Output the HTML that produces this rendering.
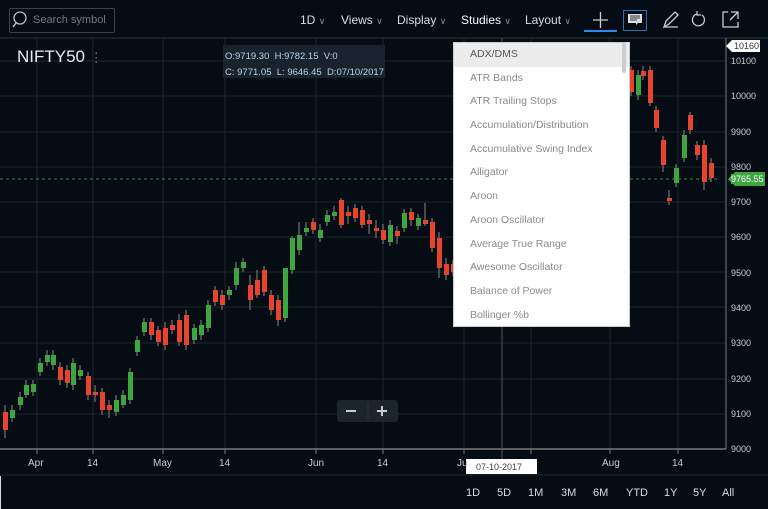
<!DOCTYPE html>
<html><head><meta charset="utf-8"><style>
body{margin:0;width:768px;height:509px;background:#060c13;overflow:hidden;font-family:"Liberation Sans",sans-serif;position:relative}
.a{position:absolute}
.tb{color:#d6dde4;font-size:12px;top:13px}
.dd{left:453px;top:42px;width:175px;height:283px;background:#fff;border:1px solid #ccc}
.dd div{height:23.7px;line-height:23.7px;padding-left:16px;font-size:10.5px;color:#8a8a8a}
.ax{font-size:9px;color:#c8cdd2}
.bt{font-size:11px;color:#d6dde4;top:487px}
</style></head><body>
<svg class="a" style="left:0;top:0" width="768" height="509">
<g stroke="#1a232c" stroke-width="1">
<line x1="37" y1="38" x2="37" y2="449"/><line x1="93" y1="38" x2="93" y2="449"/><line x1="163" y1="38" x2="163" y2="449"/><line x1="225" y1="38" x2="225" y2="449"/><line x1="316" y1="38" x2="316" y2="449"/><line x1="383" y1="38" x2="383" y2="449"/><line x1="464" y1="38" x2="464" y2="449"/><line x1="531" y1="38" x2="531" y2="449"/><line x1="610" y1="38" x2="610" y2="449"/><line x1="678" y1="38" x2="678" y2="449"/>
<line x1="0" y1="61" x2="726" y2="61"/><line x1="0" y1="96" x2="726" y2="96"/><line x1="0" y1="132" x2="726" y2="132"/><line x1="0" y1="167" x2="726" y2="167"/><line x1="0" y1="202" x2="726" y2="202"/><line x1="0" y1="237" x2="726" y2="237"/><line x1="0" y1="272" x2="726" y2="272"/><line x1="0" y1="307" x2="726" y2="307"/><line x1="0" y1="343" x2="726" y2="343"/><line x1="0" y1="379" x2="726" y2="379"/><line x1="0" y1="414" x2="726" y2="414"/>
</g>
<line x1="0" y1="38" x2="768" y2="38" stroke="#2a323a"/>
<line x1="0" y1="449" x2="726" y2="449" stroke="#777" stroke-width="1.5"/>
<line x1="726" y1="38" x2="726" y2="449" stroke="#777"/>
<g stroke="#777"><line x1="37" y1="449" x2="37" y2="454"/><line x1="93" y1="449" x2="93" y2="454"/><line x1="163" y1="449" x2="163" y2="454"/><line x1="225" y1="449" x2="225" y2="454"/><line x1="316" y1="449" x2="316" y2="454"/><line x1="383" y1="449" x2="383" y2="454"/><line x1="464" y1="449" x2="464" y2="454"/><line x1="531" y1="449" x2="531" y2="454"/><line x1="610" y1="449" x2="610" y2="454"/><line x1="678" y1="449" x2="678" y2="454"/></g>
<line x1="0" y1="475" x2="768" y2="475" stroke="#1e262e"/>
<line x1="502" y1="38" x2="502" y2="460" stroke="#555"/>
<line x1="0" y1="179" x2="720" y2="179" stroke="#3a8a3e" stroke-dasharray="3,3"/>
<g stroke="#888" stroke-width="1">
<path d="M5 405V438M12 405V422M20 392V410M26 380V398M33 380V396M40 358V376M47 350V366M53 350V370M60 362V385M67 365V388M73 358V390M80 365V380M88 372V400M95 385V402M102 388V415M109 400V418M116 395V416M123 390V408M130 368V404M137 336V356M144 318V336M151 318V340M158 326V346M165 322V350M172 320V334M179 314V346M186 310V350M194 324V344M201 320V340M208 300V332M215 286V306M222 290V310M229 286V300M236 262V290M243 258V272M250 275V310M257 270V298M264 266V296M271 290V315M278 295V326M285 275V322M292 236V274M299 222V255M306 222V236M313 218V234M320 224V242M327 210V226M334 206V220M341 198V228M348 206V224M355 204V222M362 206V228M369 214V234M376 220V238M383 224V244M390 220V246M397 226V244M404 209V232M411 208V226M418 214V230M425 203V226M432 218V252M439 232V278M446 258V280M453 260V276M631 66V96M638 70V100M643 66V80M650 66V106M656 106V132M663 136V172M669 190V205M676 164V187M684 130V162M690 112V134M697 141V160M704 140V190M711 158V182"/>
</g>
<g fill="#e8442d">
<rect x="3" y="412" width="5" height="18"/><rect x="58" y="367" width="5" height="13"/><rect x="65" y="370" width="5" height="13"/><rect x="86" y="376" width="5" height="19"/><rect x="93" y="392" width="5" height="3"/><rect x="100" y="392" width="5" height="18"/><rect x="107" y="405" width="5" height="5"/><rect x="149" y="322" width="5" height="13"/><rect x="156" y="330" width="5" height="12"/><rect x="163" y="328" width="5" height="17"/><rect x="170" y="325" width="5" height="5"/><rect x="177" y="320" width="5" height="22"/><rect x="184" y="315" width="5" height="30"/><rect x="213" y="290" width="5" height="12"/><rect x="220" y="295" width="5" height="10"/><rect x="248" y="285" width="5" height="15"/><rect x="255" y="280" width="5" height="15"/><rect x="262" y="270" width="5" height="22"/><rect x="269" y="295" width="5" height="15"/><rect x="276" y="300" width="5" height="20"/><rect x="311" y="222" width="5" height="8"/><rect x="339" y="200" width="5" height="25"/><rect x="346" y="212" width="5" height="4"/><rect x="353" y="208" width="5" height="10"/><rect x="360" y="210" width="5" height="15"/><rect x="367" y="220" width="5" height="4"/><rect x="374" y="228" width="5" height="3"/><rect x="381" y="230" width="5" height="10"/><rect x="395" y="231" width="5" height="5"/><rect x="409" y="212" width="5" height="8"/><rect x="423" y="220" width="5" height="4"/><rect x="430" y="222" width="5" height="26"/><rect x="437" y="238" width="5" height="30"/><rect x="444" y="264" width="5" height="11"/><rect x="451" y="264" width="5" height="8"/>
<rect x="629" y="70" width="5" height="22"/><rect x="641" y="71" width="5" height="5"/><rect x="648" y="70" width="5" height="33"/><rect x="654" y="110" width="5" height="18"/><rect x="661" y="140" width="5" height="25"/><rect x="667" y="198" width="5" height="3"/><rect x="688" y="115" width="5" height="15"/><rect x="695" y="145" width="5" height="10"/><rect x="702" y="145" width="5" height="37"/><rect x="709" y="163" width="5" height="15"/>
</g>
<g fill="#3da641">
<rect x="10" y="410" width="5" height="8"/><rect x="18" y="397" width="5" height="8"/><rect x="24" y="385" width="5" height="10"/><rect x="31" y="384" width="5" height="8"/><rect x="38" y="363" width="5" height="9"/><rect x="45" y="355" width="5" height="7"/><rect x="51" y="355" width="5" height="10"/><rect x="71" y="363" width="5" height="22"/><rect x="78" y="370" width="5" height="6"/><rect x="114" y="400" width="5" height="12"/><rect x="121" y="395" width="5" height="10"/><rect x="128" y="372" width="5" height="28"/><rect x="135" y="340" width="5" height="12"/><rect x="142" y="322" width="5" height="10"/><rect x="192" y="328" width="5" height="12"/><rect x="199" y="325" width="5" height="10"/><rect x="206" y="305" width="5" height="23"/><rect x="227" y="290" width="5" height="5"/><rect x="234" y="268" width="5" height="17"/><rect x="241" y="262" width="5" height="6"/><rect x="283" y="268" width="5" height="50"/><rect x="290" y="238" width="5" height="32"/><rect x="297" y="235" width="5" height="15"/><rect x="304" y="228" width="5" height="4"/><rect x="318" y="230" width="5" height="8"/><rect x="325" y="215" width="5" height="7"/><rect x="332" y="212" width="5" height="4"/><rect x="388" y="225" width="5" height="17"/><rect x="402" y="213" width="5" height="15"/><rect x="416" y="218" width="5" height="8"/><rect x="636" y="75" width="5" height="20"/><rect x="674" y="168" width="5" height="15"/><rect x="682" y="135" width="5" height="23"/>
</g>
<circle cx="20" cy="18" r="6" fill="none" stroke="#bbb" stroke-width="1.3"/><line x1="16" y1="23" x2="13" y2="27" stroke="#bbb" stroke-width="1.5"/>
<path d="M593 20H608M600.5 12V28" stroke="#ccc" stroke-width="1.3"/>
<line x1="584" y1="31" x2="617" y2="31" stroke="#2f86e6" stroke-width="2"/>
<rect x="623.5" y="10.5" width="23" height="20" fill="none" stroke="#2f6db5"/>
<path d="M628 14h14v9h-4l-2 2v-2h-8z" fill="#ddd"/><path d="M630 16h10M630 18h10M630 20h7" stroke="#333"/>
<path d="M664 27l2-6 9-9 3 3-9 9zM664 27h14" fill="none" stroke="#ccc" stroke-width="1.3"/>
<path d="M697 14a6 6 0 1 0 5 1" fill="none" stroke="#ccc" stroke-width="1.3"/><path d="M697 11v4h4" fill="none" stroke="#ccc" stroke-width="1.2"/>
<path d="M728 12h-5v15h15v-5M731 12h7v7M738 12l-8 8" fill="none" stroke="#ccc" stroke-width="1.3"/>
<path d="M732 40h28v12h-28l-6-6z" fill="#fff"/>
<path d="M728 179l7-7h30v14h-30z" fill="#3da641"/>
<rect x="466" y="459" width="71" height="15" fill="#fff"/>
<rect x="337" y="400" width="61" height="22" rx="3" fill="#1b2530"/>
<path d="M346 411h10M377 411h10M382 406v10" stroke="#ccc" stroke-width="2"/><line x1="368" y1="403" x2="368" y2="419" stroke="#333"/>
<rect x="0" y="476" width="1" height="33" fill="#ddd"/>
</svg>
<div class="a" style="left:9px;top:8px;width:104px;height:23px;border:1px solid #3a4148;border-radius:2px"></div>
<div class="a" style="left:33px;top:14px;font-size:11px;color:#777">Search symbol</div>
<div class="a tb" style="left:300px">1D <span style="font-size:9px;color:#888">∨</span></div>
<div class="a tb" style="left:341px">Views <span style="font-size:9px;color:#888">∨</span></div>
<div class="a tb" style="left:397px">Display <span style="font-size:9px;color:#888">∨</span></div>
<div class="a tb" style="left:461px;color:#fff">Studies <span style="font-size:9px;color:#888">∨</span></div>
<div class="a tb" style="left:525px">Layout <span style="font-size:9px;color:#888">∨</span></div>
<div class="a" style="left:17px;top:47px;font-size:17px;color:#e8ecef">NIFTY50 <span style="color:#777;font-size:13px">⋮</span></div>
<div class="a" style="left:223px;top:45px;width:162px;height:33px;background:#18232e"></div>
<div class="a" style="left:225px;top:49px;font-size:9.5px;color:#b9d3ea;line-height:16px">O:9719.30 &nbsp;H:9782.15 &nbsp;V:0<br>C: 9771.05 &nbsp;L: 9646.45 &nbsp;D:07/10/2017</div>
<div class="a dd">
<div style="background:#ececec;color:#555">ADX/DMS</div><div>ATR Bands</div><div>ATR Trailing Stops</div><div>Accumulation/Distribution</div><div>Accumulative Swing Index</div><div>Alligator</div><div>Aroon</div><div>Aroon Oscillator</div><div>Average True Range</div><div>Awesome Oscillator</div><div>Balance of Power</div><div>Bollinger %b</div>
<span class="a" style="left:168px;top:0;width:4px;height:30px;background:#ccc;border-radius:2px"></span>
</div>
<div class="a ax" style="left:734px;top:41px;color:#333">10160</div>
<div class="a ax" style="left:731px;top:44px;line-height:35.3px">10100<br>10000<br>9900<br>9800<br>9700<br>9600<br>9500<br>9400<br>9300<br>9200<br>9100<br>9000</div>
<div class="a ax" style="left:731px;top:174px;color:#fff;background:#3da641">9765.55</div>
<div class="a ax" style="left:476px;top:462px;color:#444">07-10-2017</div>
<div class="a" style="top:458px;left:0;width:768px;font-size:10px;color:#c8cdd2">
<span class="a" style="left:28px">Apr</span><span class="a" style="left:87px">14</span><span class="a" style="left:153px">May</span><span class="a" style="left:219px">14</span><span class="a" style="left:308px">Jun</span><span class="a" style="left:377px">14</span><span class="a" style="left:457px">Ju</span><span class="a" style="left:602px">Aug</span><span class="a" style="left:672px">14</span></div>
<div class="a bt" style="left:466px">1D</div><div class="a bt" style="left:497px">5D</div><div class="a bt" style="left:528px">1M</div><div class="a bt" style="left:561px">3M</div><div class="a bt" style="left:593px">6M</div><div class="a bt" style="left:626px">YTD</div><div class="a bt" style="left:664px">1Y</div><div class="a bt" style="left:693px">5Y</div><div class="a bt" style="left:722px">All</div>
</body></html>
